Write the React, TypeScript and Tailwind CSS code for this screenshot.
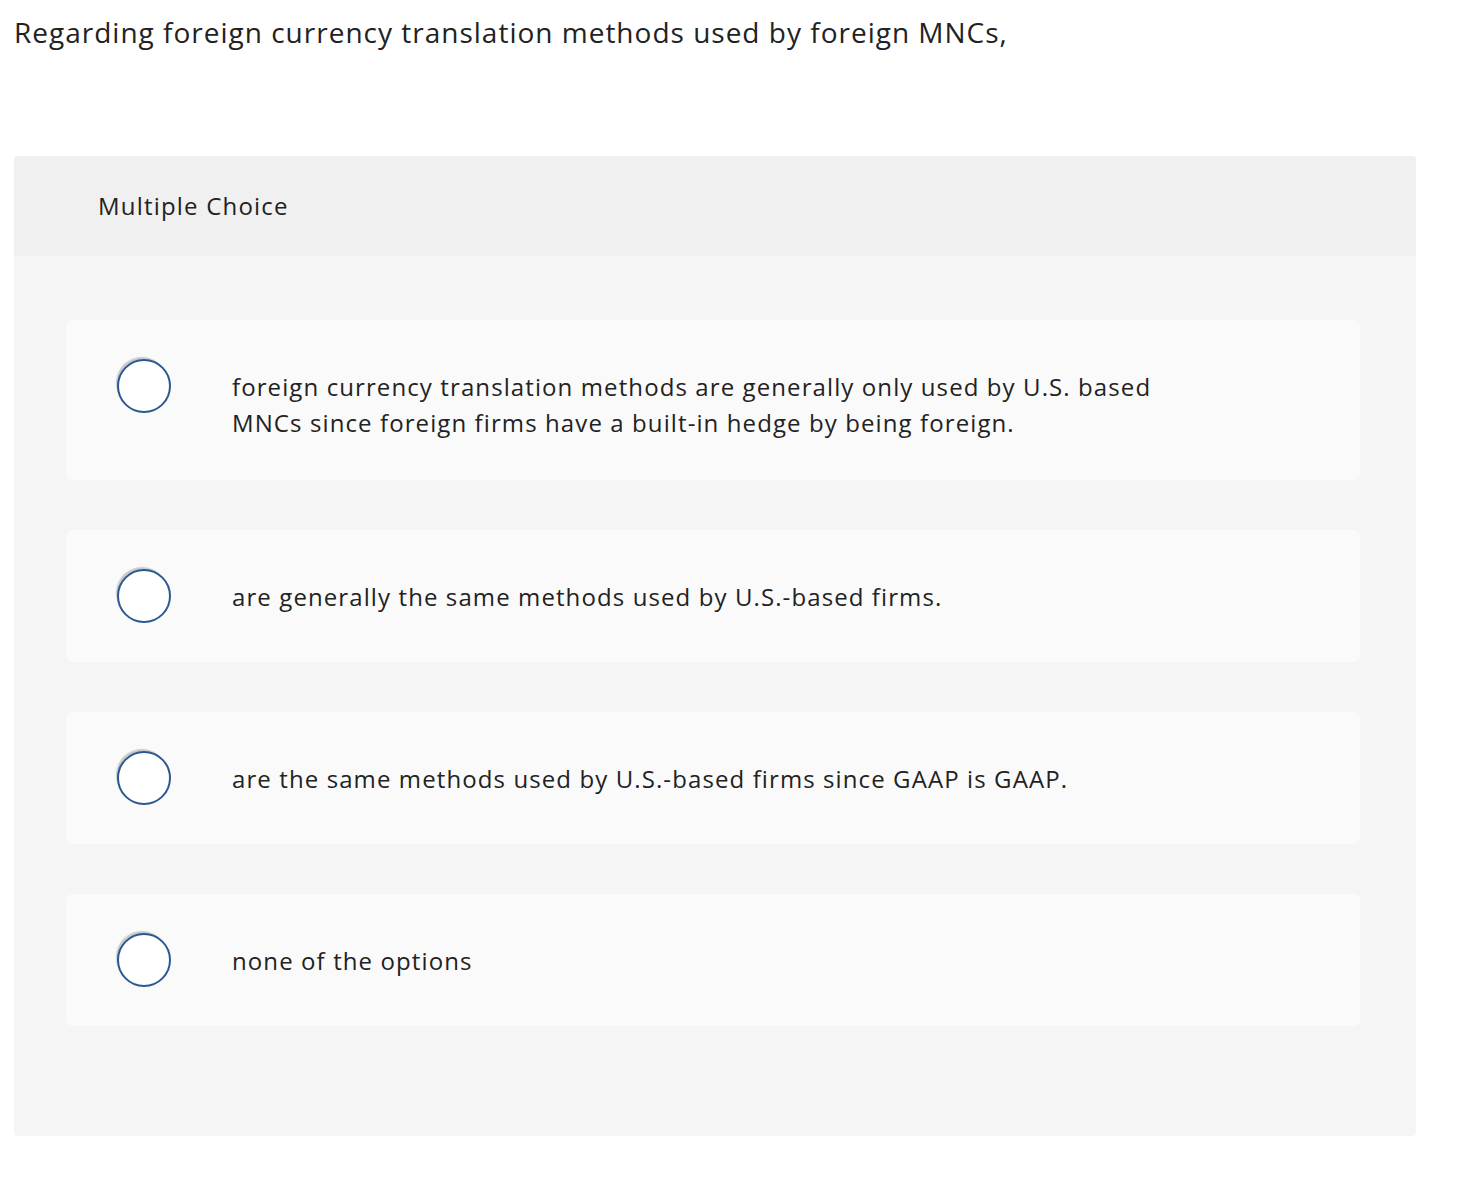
import React from 'react'

const options = [
  'foreign currency translation methods are generally only used by U.S. based MNCs since foreign firms have a built-in hedge by being foreign.',
  'are generally the same methods used by U.S.-based firms.',
  'are the same methods used by U.S.-based firms since GAAP is GAAP.',
  'none of the options',
]

export default function App() {
  return (
    <div className="min-h-screen bg-white text-[#222222] font-['Open_Sans',Arial,sans-serif]">
      {/* Question */}
      <div className="pl-[14px] pt-[13px] text-[28px] leading-[38px] tracking-[1px]">
        Regarding foreign currency translation methods used by foreign MNCs,
      </div>

      {/* Card */}
      <div className="ml-[14px] mt-[105px] w-[1402px] rounded-[4px] bg-[#f5f5f5] overflow-hidden">
        <div className="h-[100px] bg-[#f0f0f0] pl-[84px] flex items-center">
          <span className="text-[24px] tracking-[1.2px]">Multiple Choice</span>
        </div>

        <div className="pl-[52px] pr-[56px] pt-[64px] pb-[110px] flex flex-col gap-[50px]">
          {options.map((text, i) => (
            <label
              key={i}
              className="flex items-start rounded-[6px] bg-[#fafafa] py-[39px] pl-[51px] pr-[190px] cursor-pointer"
            >
              <span className="shrink-0 w-[54px] h-[54px] rounded-full bg-white border-2 border-[#2c5892] shadow-[-2px_-3px_1px_-1px_#c9c9c9]" />
              <span className="ml-[61px] pt-[10px] text-[24px] leading-[36px] tracking-[1.1px]">{text}</span>
            </label>
          ))}
        </div>
      </div>
    </div>
  )
}
